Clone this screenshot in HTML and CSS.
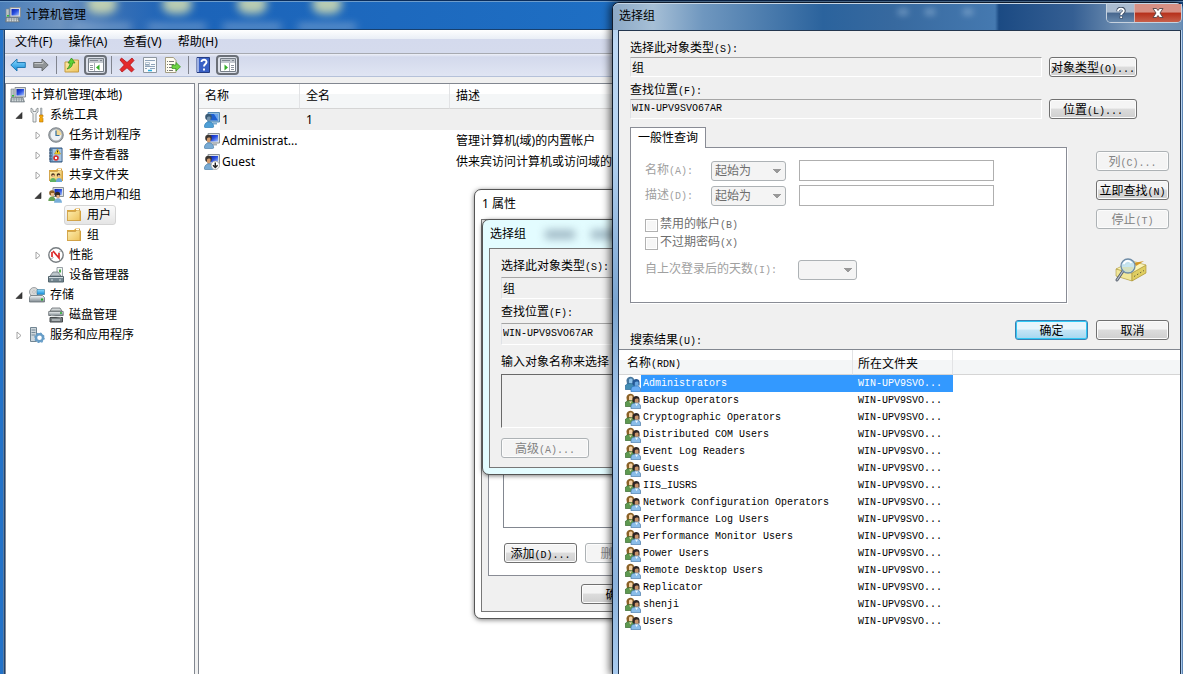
FILE: index.html
```html
<!DOCTYPE html>
<html lang="zh-CN">
<head>
<meta charset="utf-8">
<title>计算机管理</title>
<link rel="stylesheet" href="styles.css">
</head>
<body>
<svg class="defs" width="0" height="0" aria-hidden="true">
  <defs>
    <linearGradient id="g-screen" x1="0" y1="0" x2="1" y2="1"><stop offset="0" stop-color="#0a1fa8"/><stop offset=".5" stop-color="#2a50e0"/><stop offset="1" stop-color="#a9c6ff"/></linearGradient>
    <linearGradient id="g-folder" x1="0" y1="0" x2="1" y2="1"><stop offset="0" stop-color="#fdeeb0"/><stop offset="1" stop-color="#eec35c"/></linearGradient>
    <linearGradient id="g-blue" x1="0" y1="0" x2="0" y2="1"><stop offset="0" stop-color="#8fdcff"/><stop offset="1" stop-color="#0f8ad8"/></linearGradient>
    <linearGradient id="g-metal" x1="0" y1="0" x2="0" y2="1"><stop offset="0" stop-color="#f4f6f7"/><stop offset="1" stop-color="#7f8a91"/></linearGradient>
    <symbol id="i-computer" viewBox="0 0 16 16">
      <path d="M5 .5h10.500v9.500H5z" fill="#d8dcde" stroke="#8a9196"/><path d="M6.500 2h7.500v6.500H6.500z" fill="url(#g-screen)"/>
      <path d="M1 2h3v8H1z" fill="#bcc4c8" stroke="#7c868c" stroke-width=".6"/><path d="M2 8h2v1.500H2z" fill="#2fbf3a"/>
      <path d="M1 10.500h12l1.500 4.500H.5z" fill="#929ca1" stroke="#687278" stroke-width=".6"/><path d="M2 12h10.500M2 13.700h11" stroke="#dfe5e7" stroke-dasharray="1.500 1"/>
    </symbol>
    <symbol id="i-tools" viewBox="0 0 16 16">
      <path d="M2 1v4l2 1.500V15h3V6.500L9 5V1L7 2.500v2H4v-2z" fill="#eef0f1" stroke="#7d8589" stroke-width=".8"/>
      <path d="M11.500 1h1.500v7h-1.500z" fill="#b7bdc0" stroke="#858c90" stroke-width=".5"/><path d="M10.500 8h3.500v1.500l-.7 1 .7 1V15h-3.500v-3.500l.7-1-.7-1z" fill="#f3a80d" stroke="#bb7400" stroke-width=".6"/>
    </symbol>
    <symbol id="i-clock" viewBox="0 0 16 16"><circle cx="8" cy="8" r="7.300" fill="#a5abaf" stroke="#697177" stroke-width=".8"/><circle cx="8" cy="8" r="5.500" fill="#eef2f5"/><path d="M8 8V2.500A5.500 5.500 0 0 1 13.500 8z" fill="#f2d896"/><path d="M8 3.500V8.500h3.500" stroke="#37719c" fill="none" stroke-width="1.200"/></symbol>
    <symbol id="i-event" viewBox="0 0 16 16"><path d="M2 1h12v14H2z" fill="#6f9bc4" stroke="#35567e"/><path d="M5 2h8.500v12H5z" fill="#a9c5e2"/><path d="M9.500 2l3 5h-6z" fill="#ffda2d" stroke="#b78c00" stroke-width=".6"/><path d="M9.500 3.500v2" stroke="#222"/><circle cx="8" cy="11" r="2.800" fill="#d83131"/><path d="M7 10l2 2m0-2l-2 2" stroke="#fff"/><path d="M1 3h3M1 6h3M1 9h3M1 12h3" stroke="#425c78"/></symbol>
    <symbol id="i-folder" viewBox="0 0 16 16"><path d="M1 3h7l1.500-1.500H14V4h1v10H1z" fill="#dba63d"/><path d="M1.500 4.500h8L10.500 3H14v10.500H1.500z" fill="url(#g-folder)" stroke="#c89a43" stroke-width=".7"/><path d="M10 2.500h3" stroke="#fff"/></symbol>
    <symbol id="i-share" viewBox="0 0 16 16"><use href="#i-folder"/><circle cx="5" cy="8" r="1.800" fill="#4a2f1b"/><circle cx="5.300" cy="9" r="1.200" fill="#eab98c"/><path d="M2 14c0-4 6-4 6 0v1H2z" fill="#5fb265"/><circle cx="10.500" cy="8" r="1.800" fill="#33241d"/><circle cx="10.800" cy="9" r="1.200" fill="#eab98c"/><path d="M8 14c0-4 6-4 6 0v1H8z" fill="#6ca8d8"/></symbol>
    <symbol id="i-group" viewBox="0 0 16 16"><path d="M1.500 5C1 0 8.500-1 9 3.500V8H2z" fill="#8b6127"/><path d="M4 3.500C5 2 7.500 2.500 7.500 4v3L6 8.500 4 7z" fill="#f4d0a4"/><path d="M.3 13.500V10c0-3 9.400-3.500 9.400 0v3.500z" fill="#5e9950" stroke="#37682f" stroke-width=".7"/><path d="M4 8.500l1.500 2L7 8.300z" fill="#f4d0a4"/><path d="M7.500 7C7 2 14.500 1.500 14.500 6v3.500H8z" fill="#2c2424"/><path d="M9.800 6.500c1-1.500 3.700-1 3.700 0v2.500L12 10.700 9.800 9z" fill="#c9946b"/><path d="M6 15.700V13c0-4 9.500-4 9.500 0v2.700z" fill="#8abde9" stroke="#4777a5" stroke-width=".7"/><path d="M10 10.500l1.600 2.500 1.500-2.500z" fill="#eef6fc"/></symbol>
    <symbol id="i-group-sel" viewBox="0 0 16 16"><path d="M1.500 5C1 0 8.500-1 9 3.500V8H2z" fill="#48779d"/><path d="M4 3.500C5 2 7.500 2.500 7.500 4v3L6 8.500 4 7z" fill="#8fc4ed"/><path d="M.3 13.500V10c0-3 9.400-3.500 9.400 0v3.500z" fill="#438db3" stroke="#256696" stroke-width=".7"/><path d="M7.500 7C7 2 14.500 1.500 14.500 6v3.500H8z" fill="#245795"/><path d="M9.800 6.500c1-1.500 3.700-1 3.700 0v2.500L12 10.700 9.800 9z" fill="#68a7e2"/><path d="M6 15.700V13c0-4 9.500-4 9.500 0v2.700z" fill="#69adf4" stroke="#2b73bd" stroke-width=".7"/></symbol>
    <symbol id="i-user" viewBox="0 0 16 16"><path d="M4 .5h11.500v9.500H4z" fill="#dce1e4" stroke="#8b9297"/><path d="M5.500 2H14v6.500H5.500z" fill="url(#g-screen)"/><path d="M9 10.500h4v2H9z" fill="#a6adb2"/><circle cx="4.500" cy="5" r="3.300" fill="#3b3632"/><path d="M3 5.500c1-1.500 3.500-1 3.500 0v2.700L5 10 3 8.500z" fill="#d49b6c"/><path d="M.3 15c0-7 9.400-7 9.400 0l-1 .7H1z" fill="#79abd4" stroke="#44779f" stroke-width=".6"/></symbol>
    <symbol id="i-user-sel" viewBox="0 0 16 16"><path d="M4 .5h11.500v9.500H4z" fill="#91bde0" stroke="#5389b5"/><path d="M5.500 2H14v6.500H5.500z" fill="#1d5fcf"/><path d="M10 2H14v6.500z" fill="#69a3ed"/><path d="M9 10.500h4v2H9z" fill="#78aad0"/><circle cx="4.500" cy="5" r="3.300" fill="#385a76"/><path d="M3 5.500c1-1.500 3.500-1 3.500 0v2.700L5 10 3 8.500z" fill="#7593aa"/><path d="M.3 15c0-7 9.400-7 9.400 0l-1 .7H1z" fill="#4f9fd6" stroke="#2a78ae" stroke-width=".6"/></symbol>
    <symbol id="i-guest" viewBox="0 0 16 16"><use href="#i-user"/><circle cx="11.300" cy="11.300" r="4.200" fill="#fff" stroke="#999" stroke-width=".8"/><path d="M11.300 8.500v5M9 11.300l2.300 2.300 2.300-2.300" stroke="#222" stroke-width="1.400" fill="none"/></symbol>
    <symbol id="i-usersgroup" viewBox="0 0 16 16"><path d="M5 .5h10.500v9H5z" fill="#dce1e4" stroke="#8b9297"/><path d="M6.500 2H14v6H6.500z" fill="url(#g-screen)"/><circle cx="4" cy="6" r="2.800" fill="#8f6128"/><path d="M3 6h3v3L4.500 10 3 9z" fill="#e9bc8c"/><path d="M.3 14c0-6 7.400-6 7.400 0z" fill="#67a256"/><circle cx="9.500" cy="7.500" r="2.700" fill="#332824"/><path d="M8.500 8h3v2.500L10 12l-1.500-1.500z" fill="#e4ae82"/><path d="M6 15.700c0-6 8-6 8 0z" fill="#78aed9"/></symbol>
    <symbol id="i-perf" viewBox="0 0 16 16"><circle cx="8" cy="8" r="7.200" fill="#fff" stroke="#777d81" stroke-width="1.400"/><path d="M4 5v5M5 4l6 7V6" stroke="#dc2828" stroke-width="1.700" fill="none"/><path d="M4 11.500l1-1m6-5l1-1" stroke="#333"/></symbol>
    <symbol id="i-device" viewBox="0 0 16 16"><path d="M9 .5h5.500v9H9z" fill="#f3f5f5" stroke="#808a90" stroke-width=".8"/><path d="M11 2.500h2v3h-2z" fill="#49ac4c"/><path d="M2 9l3-4h5l3 4z" fill="#bcc6cb" stroke="#606a70" stroke-width=".7"/><path d="M.5 9.500h15v5.500H.5z" fill="#738690" stroke="#53646c"/><path d="M1 10.500h14M4 12v2M12 12v2" stroke="#d3dde1"/></symbol>
    <symbol id="i-storage" viewBox="0 0 16 16"><circle cx="5" cy="5" r="4.500" fill="#d8d9d8" stroke="#7e8386" stroke-width=".7"/><circle cx="5" cy="5" r="1.200" fill="#fff" stroke="#888" stroke-width=".5"/><path d="M8 2.500h7.500v5H8z" fill="url(#g-blue)" stroke="#357396" stroke-width=".6"/><path d="M1.500 8.500h12l2 2v4.500H.5v-4.500z" fill="url(#g-metal)" stroke="#69737a" stroke-width=".8"/><path d="M12 12.500h2" stroke="#1faf24" stroke-width="2"/></symbol>
    <symbol id="i-disk" viewBox="0 0 16 16"><path d="M4 1h8l2 3H2z" fill="#cfd4d5" stroke="#656b6e" stroke-width=".8"/><path d="M.7 4.500h14.500v4H.7z" fill="url(#g-metal)" stroke="#61686c" stroke-width=".8"/><path d="M12 6h2" stroke="#21ae28" stroke-width="1.600"/><path d="M2 10.500h12.500V15H2z" fill="#777e81" stroke="#45494b"/><path d="M3 9l10 1M4 13h8" stroke="#dfe3e4"/></symbol>
    <symbol id="i-service" viewBox="0 0 16 16"><path d="M1.500.5h6v14h-6z" fill="#cdd6dc" stroke="#718592"/><path d="M2.500 3h4M2.500 5.500h4M2.500 8h4" stroke="#758a98"/><circle cx="10.500" cy="10.800" r="3.500" fill="none" stroke="#679dc7" stroke-width="2.400"/><circle cx="10.500" cy="10.800" r="4.700" fill="none" stroke="#679dc7" stroke-width="1.200" stroke-dasharray="1.800 1.890"/></symbol>
    <symbol id="i-open" viewBox="0 0 8 8"><path d="M7 1v6H1z" fill="#3b3b3b" stroke="#222" stroke-width=".6"/></symbol>
    <symbol id="i-closed" viewBox="0 0 8 8"><path d="M2 .5L6 4 2 7.500z" fill="#fff" stroke="#9a9a9a" stroke-width=".9"/></symbol>
  </defs>
</svg>

<div class="desktop">
  <main class="console">
    <header class="console-title">
      <i class="smudge s1"></i><i class="smudge s2"></i><i class="smudge s3"></i><i class="smudge s4"></i>
      <svg class="icon"><use href="#i-computer"/></svg><h1 class="title-text">计算机管理</h1>
    </header>
    <div class="console-body">
      <nav class="menubar">
        <button class="menu">文件(F)</button><button class="menu">操作(A)</button><button class="menu">查看(V)</button><button class="menu">帮助(H)</button>
      </nav>
      <div class="toolbar">
        <button class="tool" aria-label="后退"><svg class="icon" viewBox="0 0 16 16"><path d="M.8 8L7 2v3.500h8.300v5H7V14z" fill="url(#g-blue)" stroke="#1872ad" stroke-width=".9"/></svg></button>
        <button class="tool" aria-label="前进"><svg class="icon" viewBox="0 0 16 16"><path d="M15.200 8L9 2v3.500H.7v5H9V14z" fill="#909496" stroke="#65696b" stroke-width=".9"/><path d="M1.500 6.500H10V4.500" stroke="#c5c8c9" fill="none"/></svg></button>
        <i class="sep"></i>
        <button class="tool" aria-label="上移"><svg class="icon" viewBox="0 0 16 16"><path d="M1 5h6l1.500-2H14.500v12H1z" fill="url(#g-folder)" stroke="#c59b43"/><path d="M3 12c4-1 5.500-3 5.500-6H11L7.500 1 4 6h2c0 2-1 4-3 6z" fill="#5fd134" stroke="#298a17" stroke-width=".7"/></svg></button>
        <button class="toggle" aria-label="显示控制台树"><svg class="icon" viewBox="0 0 16 16"><path d="M.5 1.500h15v13H.5z" fill="#fff" stroke="#777f88"/><path d="M1 2h14v4H1z" fill="#c3c8cf"/><path d="M2 3.500h8M12 3.500h2" stroke="#7d858f"/><path d="M6.500 6v8" stroke="#a6acb4"/><path d="M2 8.500h3M2 10.500h3M2 12.500h3" stroke="#8c949e"/><path d="M11.500 7.500v6l-3.500-3z" fill="#33ae27"/></svg></button>
        <i class="sep"></i>
        <button class="tool" aria-label="删除"><svg class="icon" viewBox="0 0 16 16"><path d="M2.500 1L8 5.500 13 1l2 2.500L10.800 8l4.200 4.500-2.500 2.500L8 10.800 3 15l-2-2.500L5.300 8 1 3z" fill="#e42b2d" stroke="#b31318" stroke-width=".8"/></svg></button>
        <button class="tool" aria-label="属性"><svg class="icon" viewBox="0 0 16 16"><path d="M1.500 .5h13v15h-13z" fill="#f8fafc" stroke="#8d969f"/><path d="M3 3.500h10M3 7.500h4M9 7.500h4M3 9.500h10M3 11.500h2M8 11.500h5" stroke="#8fa3b8"/><path d="M3.500 5.500h4v3h-4z" fill="none" stroke="#9badbf" stroke-width=".7"/><path d="M6 13.500h4" stroke="#28aee0" stroke-width="1.500"/></svg></button>
        <button class="tool" aria-label="导出列表"><svg class="icon" viewBox="0 0 16 16"><path d="M.5.500h8l2.500 3v12H.5z" fill="#fffdf0" stroke="#a39d84"/><path d="M2 4.500h1M2 7.500h1M2 10.500h1M2 13.500h1M4 4.500h5M4 7.500h5M4 10.500h3M4 13.500h4" stroke="#777"/><path d="M7 8h4V5.500l4.500 4.300L11 14v-2.500H7z" fill="#6ed344" stroke="#33921c" stroke-width=".7"/></svg></button>
        <i class="sep"></i>
        <button class="tool" aria-label="帮助"><svg class="icon" viewBox="0 0 16 16"><path d="M1 .5h12.500v15H1z" fill="#3960c5" stroke="#253d83"/><path d="M1 1h2v14H1z" fill="#9eb1e4"/><path d="M5.500 5c0-3 5.300-3 5 .2C10.300 7 8 7 8 9.500M8 11.500v2" stroke="#fff" stroke-width="1.900" fill="none"/></svg></button>
        <button class="toggle" aria-label="显示操作窗格"><svg class="icon" viewBox="0 0 16 16"><path d="M.5 1.500h15v13H.5z" fill="#fff" stroke="#777f88"/><path d="M1 2h14v4H1z" fill="#c3c8cf"/><path d="M2 3.500h8M12 3.500h2" stroke="#7d858f"/><path d="M9.500 6v8" stroke="#a6acb4"/><path d="M11 8.500h3M11 10.500h3M11 12.500h3" stroke="#8c949e"/><path d="M4.500 7.500v6l3.500-3z" fill="#33ae27"/></svg></button>
      </div>
      <div class="panes">
        <div class="tree" role="tree">
          <div class="node root" role="treeitem"><svg class="icon"><use href="#i-computer"/></svg><span class="node-label">计算机管理(本地)</span></div>
          <div class="node l1" role="treeitem"><span class="arrow"><svg class="tri"><use href="#i-open"/></svg></span><svg class="icon"><use href="#i-tools"/></svg><span class="node-label">系统工具</span></div>
          <div class="node l2" role="treeitem"><span class="arrow"><svg class="tri"><use href="#i-closed"/></svg></span><svg class="icon"><use href="#i-clock"/></svg><span class="node-label">任务计划程序</span></div>
          <div class="node l2" role="treeitem"><span class="arrow"><svg class="tri"><use href="#i-closed"/></svg></span><svg class="icon"><use href="#i-event"/></svg><span class="node-label">事件查看器</span></div>
          <div class="node l2" role="treeitem"><span class="arrow"><svg class="tri"><use href="#i-closed"/></svg></span><svg class="icon"><use href="#i-share"/></svg><span class="node-label">共享文件夹</span></div>
          <div class="node l2" role="treeitem"><span class="arrow"><svg class="tri"><use href="#i-open"/></svg></span><svg class="icon"><use href="#i-usersgroup"/></svg><span class="node-label">本地用户和组</span></div>
          <div class="node l3" role="treeitem"><span class="picked"><svg class="icon"><use href="#i-folder"/></svg><span class="node-label">用户</span></span></div>
          <div class="node l3" role="treeitem"><span class="plain"><svg class="icon"><use href="#i-folder"/></svg><span class="node-label">组</span></span></div>
          <div class="node l2" role="treeitem"><span class="arrow"><svg class="tri"><use href="#i-closed"/></svg></span><svg class="icon"><use href="#i-perf"/></svg><span class="node-label">性能</span></div>
          <div class="node l2" role="treeitem"><span class="arrow"></span><svg class="icon"><use href="#i-device"/></svg><span class="node-label">设备管理器</span></div>
          <div class="node l1" role="treeitem"><span class="arrow"><svg class="tri"><use href="#i-open"/></svg></span><svg class="icon"><use href="#i-storage"/></svg><span class="node-label">存储</span></div>
          <div class="node l2" role="treeitem"><span class="arrow"></span><svg class="icon"><use href="#i-disk"/></svg><span class="node-label">磁盘管理</span></div>
          <div class="node l1" role="treeitem"><span class="arrow"><svg class="tri"><use href="#i-closed"/></svg></span><svg class="icon"><use href="#i-service"/></svg><span class="node-label">服务和应用程序</span></div>
        </div>
        <div class="users">
          <table class="users-table">
            <colgroup><col class="c-name"><col class="c-full"><col></colgroup>
            <thead><tr><th>名称</th><th>全名</th><th>描述</th></tr></thead>
            <tbody>
              <tr class="current"><td><span class="cell"><svg class="icon"><use href="#i-user-sel"/></svg>1</span></td><td>1</td><td></td></tr>
              <tr><td><span class="cell"><svg class="icon"><use href="#i-user"/></svg>Administrat...</span></td><td></td><td>管理计算机(域)的内置帐户</td></tr>
              <tr><td><span class="cell"><svg class="icon"><use href="#i-guest"/></svg>Guest</span></td><td></td><td>供来宾访问计算机或访问域的</td></tr>
            </tbody>
          </table>
        </div>
      </div>
    </div>
  </main>

  <section class="props" aria-label="1 属性">
    <h2 class="props-title">1 属性</h2>
    <div class="props-client">
      <div class="props-page">
        <div class="member-list"></div>
        <div class="props-actions"><button class="btn">添加<span class="m">(D)...</span></button><button class="btn" disabled>删除<span class="m">(R)</span></button></div>
      </div>
      <div class="props-footer"><button class="btn">确定</button></div>
    </div>
  </section>

  <section class="picker" aria-label="选择组">
    <h2 class="picker-title">选择组<i class="haze h1"></i><i class="haze h2"></i></h2>
    <div class="picker-client">
      <label class="lbl" for="p-type">选择此对象类型<span class="m">(S):</span></label>
      <input class="field cjk" id="p-type" value="组" readonly>
      <label class="lbl" for="p-loc">查找位置<span class="m">(F):</span></label>
      <input class="field" id="p-loc" value="WIN-UPV9SVO67AR" readonly>
      <label class="lbl names-label" for="p-names">输入对象名称来选择</label>
      <textarea class="names" id="p-names" readonly></textarea>
      <button class="btn wide" disabled>高级<span class="m">(A)...</span></button>
    </div>
  </section>

  <section class="finder" aria-label="选择组">
    <header class="finder-title">
      <h2 class="finder-name">选择组</h2>
      <i class="glint t1"></i><i class="glint t2"></i><i class="glint t3"></i>
      <div class="caption">
        <button class="cap help" aria-label="帮助"><svg class="cap-icon" viewBox="0 0 12 12"><path d="M3 4.200C3 .3 9.400.5 9 4c-.2 2-2.800 1.800-2.800 4M6.200 9.200v2.300" fill="none" stroke="#3c4b60" stroke-width="3.400"/><path d="M3 4.200C3 .8 9 .8 8.800 4 8.600 6 6.200 5.800 6.200 8M6.200 9.500V11" fill="none" stroke="#fff" stroke-width="1.900"/></svg></button>
        <button class="cap close" aria-label="关闭"><svg class="cap-icon" viewBox="0 0 12 12"><path d="M1 1.500h3.500L6 3.500l1.500-2H11L8 6l3 4.500H7.500L6 8.500l-1.500 2H1L4 6z" fill="#fff" stroke="#574345" stroke-width=".9"/></svg></button>
      </div>
    </header>
    <div class="finder-client">
      <div class="scope">
        <div class="stack"><label class="lbl" for="f-type">选择此对象类型<span class="m">(S):</span></label><input class="field cjk" id="f-type" value="组" readonly></div>
        <button class="btn wide">对象类型<span class="m">(O)...</span></button>
        <div class="stack"><label class="lbl" for="f-loc">查找位置<span class="m">(F):</span></label><input class="field" id="f-loc" value="WIN-UPV9SVO67AR" readonly></div>
        <button class="btn wide">位置<span class="m">(L)...</span></button>
      </div>
      <div class="query">
        <div class="query-main">
          <button class="tab">一般性查询</button>
          <div class="query-page">
            <div class="criteria">
              <label class="dim" for="q-name">名称<span class="m">(A):</span></label>
              <select class="combo" aria-label="名称条件" disabled><option>起始为</option></select>
              <input class="box" id="q-name" disabled>
              <label class="dim" for="q-desc">描述<span class="m">(D):</span></label>
              <select class="combo" aria-label="描述条件" disabled><option>起始为</option></select>
              <input class="box" id="q-desc" disabled>
            </div>
            <div class="checks">
              <label class="check"><input class="tick" type="checkbox" disabled><span>禁用的帐户<span class="m">(B)</span></span></label>
              <label class="check"><input class="tick" type="checkbox" disabled><span>不过期密码<span class="m">(X)</span></span></label>
            </div>
            <div class="days"><label class="dim" for="q-days">自上次登录后的天数<span class="m">(I):</span></label><select class="combo short" id="q-days" disabled><option></option></select></div>
          </div>
        </div>
        <div class="side">
          <button class="btn" disabled>列<span class="m">(C)...</span></button>
          <button class="btn">立即查找<span class="m">(N)</span></button>
          <button class="btn" disabled>停止<span class="m">(T)</span></button>
          <svg class="search-art" viewBox="0 0 32 24"><path d="M1 11l15-7 15 3v8l-14 8-16-5z" fill="#c8b84e"/><path d="M1 11l16 4v8L1 18z" fill="#f1e79b" stroke="#ac9740" stroke-width=".6"/><path d="M17 15L31 7v8l-14 8z" fill="#dfce62" stroke="#a78d30" stroke-width=".6"/><path d="M1 11l16-8 14 4-14 8z" fill="#faf4b9" stroke="#b09b3f" stroke-width=".6"/><path d="M19 5l10-2-8 5z" fill="#d39622"/><path d="M19 18.500l10-6" stroke="#6e663c" stroke-dasharray="1.500 2"/><path d="M8 13l-6 9" stroke="#555e6b" stroke-width="3" stroke-linecap="round"/><path d="M8 13l-6 9" stroke="#bac3ce" stroke-width="1.200" stroke-linecap="round"/><circle cx="13" cy="8" r="7" fill="#bfe2f6" fill-opacity=".88" stroke="#6f8ca6" stroke-width="1.300"/><path d="M7 9h12c-1 6-10 7-12 0z" fill="#dcdca0" fill-opacity=".6"/><path d="M8.500 6c2-4 6-4 8-1" stroke="#fff" stroke-width="1.800" fill="none"/></svg>
        </div>
      </div>
      <div class="confirm"><span class="results-label">搜索结果<span class="m">(U):</span></span><button class="btn primary">确定</button><button class="btn">取消</button></div>
      <div class="results">
        <table class="results-table">
          <colgroup><col class="c-rdn"><col class="c-folder"><col></colgroup>
          <thead><tr><th>名称<span class="m">(RDN)</span></th><th>所在文件夹</th><th></th></tr></thead>
          <tbody>
            <tr class="selected"><td><span class="entry"><svg class="icon"><use href="#i-group-sel"/></svg>Administrators</span></td><td>WIN-UPV9SVO...</td><td></td></tr>
            <tr><td><span class="entry"><svg class="icon"><use href="#i-group"/></svg>Backup Operators</span></td><td>WIN-UPV9SVO...</td><td></td></tr>
            <tr><td><span class="entry"><svg class="icon"><use href="#i-group"/></svg>Cryptographic Operators</span></td><td>WIN-UPV9SVO...</td><td></td></tr>
            <tr><td><span class="entry"><svg class="icon"><use href="#i-group"/></svg>Distributed COM Users</span></td><td>WIN-UPV9SVO...</td><td></td></tr>
            <tr><td><span class="entry"><svg class="icon"><use href="#i-group"/></svg>Event Log Readers</span></td><td>WIN-UPV9SVO...</td><td></td></tr>
            <tr><td><span class="entry"><svg class="icon"><use href="#i-group"/></svg>Guests</span></td><td>WIN-UPV9SVO...</td><td></td></tr>
            <tr><td><span class="entry"><svg class="icon"><use href="#i-group"/></svg>IIS_IUSRS</span></td><td>WIN-UPV9SVO...</td><td></td></tr>
            <tr><td><span class="entry"><svg class="icon"><use href="#i-group"/></svg>Network Configuration Operators</span></td><td>WIN-UPV9SVO...</td><td></td></tr>
            <tr><td><span class="entry"><svg class="icon"><use href="#i-group"/></svg>Performance Log Users</span></td><td>WIN-UPV9SVO...</td><td></td></tr>
            <tr><td><span class="entry"><svg class="icon"><use href="#i-group"/></svg>Performance Monitor Users</span></td><td>WIN-UPV9SVO...</td><td></td></tr>
            <tr><td><span class="entry"><svg class="icon"><use href="#i-group"/></svg>Power Users</span></td><td>WIN-UPV9SVO...</td><td></td></tr>
            <tr><td><span class="entry"><svg class="icon"><use href="#i-group"/></svg>Remote Desktop Users</span></td><td>WIN-UPV9SVO...</td><td></td></tr>
            <tr><td><span class="entry"><svg class="icon"><use href="#i-group"/></svg>Replicator</span></td><td>WIN-UPV9SVO...</td><td></td></tr>
            <tr><td><span class="entry"><svg class="icon"><use href="#i-group"/></svg>shenji</span></td><td>WIN-UPV9SVO...</td><td></td></tr>
            <tr><td><span class="entry"><svg class="icon"><use href="#i-group"/></svg>Users</span></td><td>WIN-UPV9SVO...</td><td></td></tr>
          </tbody>
        </table>
      </div>
    </div>
  </section>
</div>
</body>
</html>
```
FILE: styles.css
```css
* { box-sizing: border-box; }
body { margin: 0; color: #000; font: 12px/16px "Noto Sans", "Noto Sans CJK SC", sans-serif; }
button, input, select, textarea { margin: 0; padding: 0; border: 0; background: none; color: inherit; font: inherit; }
h1, h2 { margin: 0; font-size: 12px; font-weight: 400; }
table { width: 100%; border-collapse: separate; border-spacing: 0; table-layout: fixed; }
th, td { padding: 0; text-align: left; font-weight: 400; white-space: nowrap; overflow: hidden; }
.defs { position: absolute; }
.icon { display: block; flex: none; width: 16px; height: 16px; }
.m { font-family: "Liberation Mono", monospace; font-size: 10px; }

.desktop { position: relative; height: 100vh; overflow: hidden; background: #0a2d5c; }

/* Management console */
.console { display: flex; flex-direction: column; height: 100%; padding-top: 1px; }
.console-title { position: relative; display: flex; align-items: center; gap: 5px; height: 29px; padding: 0 5px 2px; border-top: 1px solid #6e9dcc; border-bottom: 1px solid #17406f; background: linear-gradient(90deg, #4a7db8 0, #6d93bf 60px, #3a71b5 110px, #1c63b8 170px, #1e6fc4 620px, #1b4f8f); overflow: hidden; }
.title-text { position: relative; }
.smudge { position: absolute; top: -8px; width: 30px; height: 20px; border-radius: 10px; background: #d5dfb2; filter: blur(4px); opacity: .85; }
.smudge::after { content: ""; position: absolute; left: -14px; top: 30px; width: 58px; height: 6px; background: #9db8d6; opacity: .8; }
.s1 { left: 87px; } .s2 { left: 162px; } .s3 { left: 237px; } .s4 { left: 312px; }
.console-body { display: flex; flex-direction: column; flex: 1; min-height: 0; padding-left: 5px; background: linear-gradient(90deg, #2373c9 0, #2373c9 3px, #8fb7df 3px, #1d426e 4px, #1d426e 5px, #f0f0f0 5px); }
.menubar { display: flex; gap: 16px; height: 24px; padding-left: 10px; background: linear-gradient(#fff 0, #e9eef6 9px, #d4daed 9px, #d5dbed); border-bottom: 1px solid #a7aab1; }
.toolbar { display: flex; align-items: center; height: 23px; padding-left: 5px; gap: 7px; background: linear-gradient(#eef0f8 0, #d3d9ec 3px, #e0e5f3); border-bottom: 1px solid #b5c1d9; }
.toggle { display: flex; align-items: center; justify-content: center; width: 23px; height: 20px; margin: 0 -3px; border: 2px solid #6b7078; border-radius: 4px; background: #dde1ea; }
.sep { width: 1px; height: 18px; background: #81858f; }
.panes { display: flex; flex: 1; gap: 3px; min-height: 0; padding-top: 6px; background: #f0f0f0; }
.tree { width: 190px; padding-top: 1px; border: 1px solid #828790; border-bottom: 0; background: #fff; }
.node { display: flex; align-items: center; gap: 5px; height: 20px; }
.arrow { display: flex; justify-content: center; width: 11px; }
.tri { width: 8px; height: 9px; }
.root { padding-left: 4px; } .l1 { padding-left: 7px; } .l2 { padding-left: 26px; } .l3 { padding-left: 58px; }
.picked, .plain { display: flex; align-items: center; gap: 5px; height: 20px; padding: 0 4px 0 1px; border: 1px solid transparent; border-radius: 3px; }
.picked { border-color: #d4d4d4; background: linear-gradient(#fafafa, #e5e5e5); }
.users { flex: 1; border: 1px solid #828790; border-bottom: 0; background: #fff; }
.c-name { width: 101px; } .c-full { width: 150px; }
.users-table th { height: 25px; padding-left: 6px; border-right: 1px solid #e2e3e5; border-bottom: 1px solid #d5d5d5; background: linear-gradient(#fff 40%, #f4f6f7 40%); }
.users-table td { height: 21px; padding-left: 6px; }
.users-table td:first-child { padding-left: 5px; }
.cell { display: flex; align-items: center; gap: 2px; }
.current td { background: #efefef; }
.current td:first-child { background: linear-gradient(90deg, #fff 21px, #efefef 21px); }

/* Shared dialog controls */
.lbl { display: block; height: 18px; line-height: 18px; white-space: nowrap; }
.field { display: block; width: 100%; height: 20px; padding: 0 1px 2px; border: 1px solid #fff; border-top-color: #a5a5a5; border-left-color: #dfe2e6; background: #f0f0f0; font: 10px/16px "Liberation Mono", monospace; }
.field.cjk { font: 12px/16px "Noto Sans CJK SC", sans-serif; }
.btn { width: 73px; height: 20px; padding-top: 1px; border: 1px solid #707070; border-radius: 3px; background: linear-gradient(#f4f4f4 45%, #dcdcdc 50%, #cfcfcf); box-shadow: inset 0 0 0 1px #fcfcfc; line-height: 17px; white-space: nowrap; }
.btn.wide { width: 88px; }
.btn:disabled { border-color: #adb2b5; background: #f4f4f4; color: #838383; }
.btn.primary { border-color: #3c7fb1; background: linear-gradient(#e8f5fc 45%, #c4e5f6 50%, #a5d7f0); box-shadow: inset 0 0 0 1px #31c8f5; }

/* Properties dialog */
.props { position: absolute; left: 474px; top: 189px; display: flex; flex-direction: column; width: 340px; height: 430px; padding: 0 6px 6px; border: 1px solid #555; border-radius: 7px; background: #fff; box-shadow: 0 1px 5px rgba(0, 0, 0, .5); }
.props-title { height: 29px; padding-left: 1px; line-height: 28px; }
.props-client { display: flex; flex-direction: column; flex: 1; border: 1px solid #777; background: #f0f0f0; }
.props-page { display: flex; flex-direction: column; flex: 1; margin: 6px 6px 0; padding: 14px 14px 12px; border: 1px solid #898c95; background: #fff; }
.member-list { flex: 1; border: 1px solid #828790; }
.props-actions { display: flex; gap: 8px; padding: 15px 0 0 1px; }
.props-footer { padding: 8px 0 7px 99px; }

/* Small object picker */
.picker { position: absolute; left: 482px; top: 219px; width: 340px; padding: 0 6px 6px; border: 1px solid #555; border-radius: 7px; background: #e3fcff; box-shadow: 0 1px 4px rgba(0, 0, 0, .5); }
.picker-title { position: relative; height: 28px; padding-left: 1px; line-height: 28px; }
.haze { position: absolute; top: 10px; height: 9px; background: #71899c; filter: blur(4px); opacity: .6; }
.h1 { left: 56px; width: 30px; } .h2 { left: 102px; width: 34px; }
.picker-client { padding: 8px 11px 9px; border: 1px solid #777; background: #f0f0f0; }
.picker .field { height: 22px; margin: 2px 0 4px; }
.names-label { padding-top: 4px; height: 22px; }
.names { display: block; width: 100%; height: 54px; margin: 3px 0 10px; border: 1px solid #fff; border-top-color: #696969; border-left-color: #696969; background: #f0f0f0; resize: none; }

/* Object finder */
.finder { position: absolute; left: 612px; right: 0; top: 2px; bottom: 0; display: flex; flex-direction: column; padding: 0 1px 0 5px; border: 1px solid #111c2c; border-right-color: #5f87b5; border-bottom: 0; border-radius: 7px 7px 0 0; background: linear-gradient(#a9c6e2 0, #bed8f4 40px, #b4d2f1 150px, #7aa4d0 300px, #a8caee 420px, #8bb2dc 580px, #a8caee); box-shadow: -1px 0 9px 1px rgba(0, 0, 0, .65); }
.finder-title { position: relative; display: flex; justify-content: space-between; align-items: flex-start; height: 27px; margin: 0 -1px 0 -5px; padding-left: 6px; border-top: 1px solid #c6d6e6; border-radius: 6px 6px 0 0; background: linear-gradient(90deg, #8ca9c6 0, #a6bfd6 40px, #6f97bf 90px, #2b639d 210px, #37699f 280px, #4579b0 382px, #1b4a83 386px, #355f93 460px, #7d9ab9 520px, #6d8fb4); }
.finder-name { line-height: 23px; }
.glint { position: absolute; top: 5px; width: 10px; height: 6px; background: #a9c6e2; filter: blur(3px); opacity: .5; }
.t1 { left: 285px; } .t2 { left: 312px; } .t3 { left: 350px; }
.caption { display: flex; height: 19px; border: 1px solid #c6d2df; border-top: 0; border-radius: 0 0 5px 5px; overflow: hidden; }
.cap { display: flex; align-items: center; justify-content: center; }
.cap-icon { width: 12px; height: 12px; }
.help { width: 27px; background: linear-gradient(#a9bbcf 45%, #47678e 50%, #6788ac); }
.close { width: 47px; border-left: 1px solid #d5b3b0; background: linear-gradient(#d79084 45%, #b6301b 50%, #c7604b); }
.finder-client { display: flex; flex-direction: column; flex: 1; min-height: 0; padding-top: 8px; border: 1px solid #24364f; border-bottom: 0; background: #f0f0f0; }
.scope { display: grid; grid-template-columns: 1fr 88px; gap: 4px 7px; align-items: end; padding: 0 43px 0 11px; }
.query { display: grid; grid-template-columns: 1fr 73px; gap: 29px; padding: 8px 11px 0; }
.tab { display: block; position: relative; width: 76px; height: 21px; margin-bottom: -1px; border: 1px solid #898c95; border-bottom: 0; background: #fff; line-height: 20px; }
.query-page { height: 156px; padding: 12px 14px; border: 1px solid #898c95; background: #fff; box-shadow: 1px 1px 0 #fff; }
.criteria { display: grid; grid-template-columns: 53px 75px 195px; gap: 4px 13px; align-items: center; }
.dim { color: #a0a0a0; white-space: nowrap; }
.combo { width: 75px; height: 20px; padding-left: 3px; appearance: none; border: 1px solid #adb2b5; border-radius: 3px; background: #f4f4f4 conic-gradient(from -45deg at 50% 100%, #999 0 90deg, transparent 90deg) no-repeat right 4px center / 8px 4px; color: #6d6d6d; opacity: 1; }
.combo.short { width: 59px; }
.box { width: 195px; height: 21px; border: 1px solid #afafaf; background: #fff; }
.checks { display: grid; gap: 2px; padding-top: 11px; }
.check { display: flex; align-items: center; gap: 2px; height: 16px; color: #6d6d6d; }
.tick { width: 13px; height: 13px; appearance: none; border: 1px solid #b1b1b1; background: #f6f6f6; box-shadow: inset 0 0 0 1px #fff; }
.days { display: flex; align-items: center; gap: 21px; padding-top: 9px; }
.side { display: flex; flex-direction: column; gap: 9px; padding-top: 24px; }
.search-art { width: 32px; height: 24px; margin: 20px 0 0 19px; }
.confirm { display: flex; gap: 8px; height: 46px; padding: 17px 11px 0; }
.results-label { flex: 1; align-self: flex-end; line-height: 15px; }
.results { flex: 1; min-height: 0; overflow: hidden; border-top: 1px solid #828790; background: #fff; }
.c-rdn { width: 234px; } .c-folder { width: 100px; }
.results-table th { height: 25px; padding: 3px 0 0 5px; border-right: 1px solid #e2e3e5; border-bottom: 1px solid #d5d5d5; background: linear-gradient(#fff 40%, #f4f6f7 40%); }
.results-table th:first-child { padding-left: 8px; }
.results-table th:last-child { border-right: 0; }
.results-table td { height: 17px; padding-left: 5px; font: 10px/17px "Liberation Mono", monospace; }
.results-table td:first-child { padding-left: 6px; }
.entry { display: flex; align-items: center; gap: 2px; }
.selected td { background: #39f; color: #fff; }
.selected td:first-child { background: linear-gradient(90deg, #fff 22px, #39f 22px); }
.selected td:last-child { background: none; }
```
